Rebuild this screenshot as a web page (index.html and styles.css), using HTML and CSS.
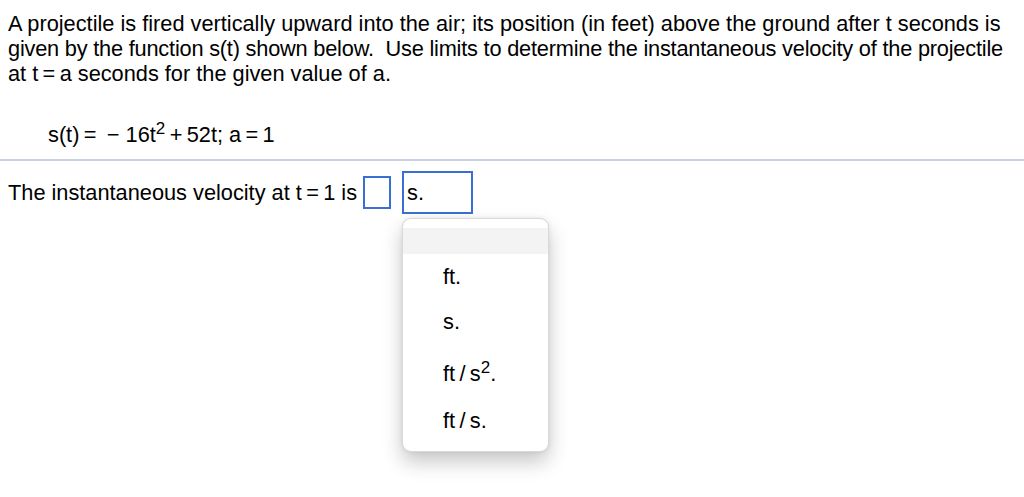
FILE: index.html
```html
<!DOCTYPE html>
<html>
<head>
<meta charset="utf-8">
<link rel="stylesheet" href="styles.css">
</head>
<body>
<div class="page">
  <p class="prompt">
    <span class="line">A projectile is fired vertically upward into the air; its position (in feet) above the ground after t seconds is</span>
    <span class="line tight">given by the function s(t) shown below.&nbsp; Use limits to determine the instantaneous velocity of the projectile</span>
    <span class="line">at t&#8201;=&#8201;a seconds for the given value of a.</span>
  </p>
  <p class="equation">s(t)&#8201;=&#8201; &minus; 16t<sup>2</sup>&#8201;+&#8201;52t; a&#8201;=&#8201;1</p>
</div>
<div class="divider"></div>
<div class="answer">
  <span class="label">The instantaneous velocity at t&#8201;=&#8201;1 is</span>
  <span class="box small"></span>
  <span class="box unit">s.</span>
</div>
<div class="menu">
  <div class="item blank"></div>
  <div class="item">ft.</div>
  <div class="item">s.</div>
  <div class="item power">ft&#8201;/&#8201;s<sup>2</sup>.</div>
  <div class="item last">ft&#8201;/&#8201;s.</div>
</div>
</body>
</html>
```
FILE: styles.css
```css
html, body {
  margin: 0;
  padding: 0;
  background: #fff;
}
body {
  min-height: 497px;
  font-family: "Liberation Sans", Arial, sans-serif;
  font-size: 21.75px;
  line-height: 25px;
  color: #000;
}
.page {
  padding: 11px 0 0 8px;
}
.prompt {
  margin: 0;
}
.line {
  display: block;
  white-space: nowrap;
}
.line.tight {
  letter-spacing: -0.2px;
}
.equation {
  margin: 36px 0 0 40px;
}
sup {
  font-size: 0.78em;
  line-height: 0;
  vertical-align: 0.45em;
}
.divider {
  margin-top: 12px;
  height: 2px;
  background: #c8d1e1;
}
.answer {
  display: flex;
  align-items: center;
  margin-top: 10px;
  padding-left: 8px;
  height: 43px;
}
.label {
  margin-right: 6px;
}
.box {
  box-sizing: border-box;
  border: 2px solid #3a6fd2;
  background: #fff;
}
.small {
  width: 28px;
  height: 33px;
}
.unit {
  margin-left: 11px;
  width: 71px;
  height: 43px;
  padding: 7px 0 0 3px;
}
.menu {
  margin: 4px 0 0 402px;
  width: 147px;
  box-sizing: border-box;
  padding: 9px 0 8px 0;
  border: 1px solid #d9d9d9;
  border-radius: 9px;
  background: #fff;
  box-shadow: 0 10px 20px rgba(0, 0, 0, 0.22), 0 0 4px rgba(0, 0, 0, 0.08);
}
.item {
  padding: 10px 0 10px 40px;
}
.item sup {
  vertical-align: 0.5em;
}
.item.power {
  padding-top: 17px;
}
.item.last {
  padding-top: 12px;
}
.item.blank {
  height: 26px;
  padding: 0;
  background: #f3f3f3;
}
```
